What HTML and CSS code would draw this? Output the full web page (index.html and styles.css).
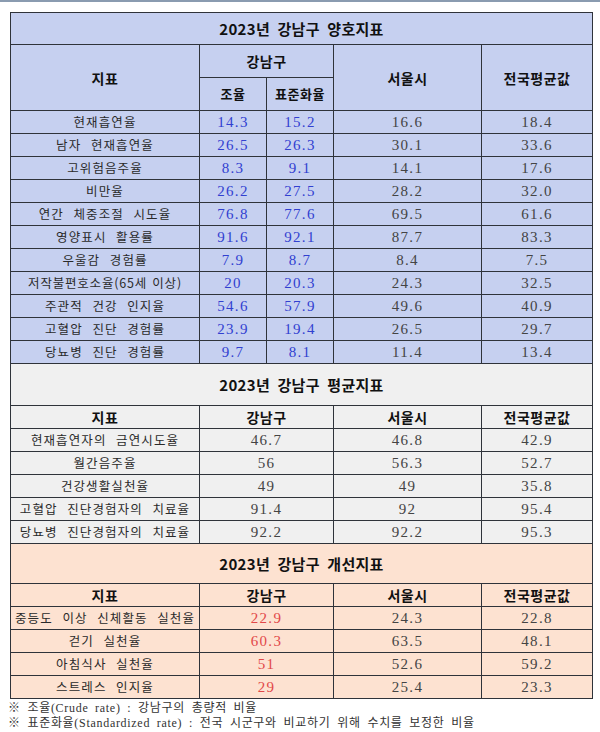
FILE: index.html
```html
<!DOCTYPE html>
<html lang="ko">
<head>
<meta charset="utf-8">
<link rel="stylesheet" href="styles.css">
</head>
<body>
<div class="topline"></div>
<table class="stats">
  <colgroup>
    <col class="c1"><col class="c2"><col class="c3"><col class="c4"><col class="c5">
  </colgroup>
  <tbody class="good">
    <tr class="title"><td colspan="5">2023년 강남구 양호지표</td></tr>
    <tr class="head h2"><td rowspan="2">지표</td><td colspan="2">강남구</td><td rowspan="2">서울시</td><td rowspan="2">전국평균값</td></tr>
    <tr class="head h2 sub"><td>조율</td><td>표준화율</td></tr>
    <tr><td class="name">현재흡연율</td><td class="b">14.3</td><td class="b">15.2</td><td class="n">16.6</td><td class="n">18.4</td></tr>
    <tr><td class="name">남자 현재흡연율</td><td class="b">26.5</td><td class="b">26.3</td><td class="n">30.1</td><td class="n">33.6</td></tr>
    <tr><td class="name">고위험음주율</td><td class="b">8.3</td><td class="b">9.1</td><td class="n">14.1</td><td class="n">17.6</td></tr>
    <tr><td class="name">비만율</td><td class="b">26.2</td><td class="b">27.5</td><td class="n">28.2</td><td class="n">32.0</td></tr>
    <tr><td class="name">연간 체중조절 시도율</td><td class="b">76.8</td><td class="b">77.6</td><td class="n">69.5</td><td class="n">61.6</td></tr>
    <tr><td class="name">영양표시 활용률</td><td class="b">91.6</td><td class="b">92.1</td><td class="n">87.7</td><td class="n">83.3</td></tr>
    <tr><td class="name">우울감 경험률</td><td class="b">7.9</td><td class="b">8.7</td><td class="n">8.4</td><td class="n">7.5</td></tr>
    <tr><td class="name tight">저작불편호소율(65세 이상)</td><td class="b">20</td><td class="b">20.3</td><td class="n">24.3</td><td class="n">32.5</td></tr>
    <tr><td class="name">주관적 건강 인지율</td><td class="b">54.6</td><td class="b">57.9</td><td class="n">49.6</td><td class="n">40.9</td></tr>
    <tr><td class="name">고혈압 진단 경험률</td><td class="b">23.9</td><td class="b">19.4</td><td class="n">26.5</td><td class="n">29.7</td></tr>
    <tr><td class="name">당뇨병 진단 경험률</td><td class="b">9.7</td><td class="b">8.1</td><td class="n">11.4</td><td class="n">13.4</td></tr>
  </tbody>
  <tbody class="avg">
    <tr class="title t2"><td colspan="5">2023년 강남구 평균지표</td></tr>
    <tr class="head"><td>지표</td><td colspan="2">강남구</td><td>서울시</td><td>전국평균값</td></tr>
    <tr><td class="name">현재흡연자의 금연시도율</td><td class="n" colspan="2">46.7</td><td class="n">46.8</td><td class="n">42.9</td></tr>
    <tr><td class="name">월간음주율</td><td class="n" colspan="2">56</td><td class="n">56.3</td><td class="n">52.7</td></tr>
    <tr><td class="name">건강생활실천율</td><td class="n" colspan="2">49</td><td class="n">49</td><td class="n">35.8</td></tr>
    <tr><td class="name">고혈압 진단경험자의 치료율</td><td class="n" colspan="2">91.4</td><td class="n">92</td><td class="n">95.4</td></tr>
    <tr><td class="name">당뇨병 진단경험자의 치료율</td><td class="n" colspan="2">92.2</td><td class="n">92.2</td><td class="n">95.3</td></tr>
  </tbody>
  <tbody class="imp">
    <tr class="title t3"><td colspan="5">2023년 강남구 개선지표</td></tr>
    <tr class="head"><td>지표</td><td colspan="2">강남구</td><td>서울시</td><td>전국평균값</td></tr>
    <tr><td class="name">중등도 이상 신체활동 실천율</td><td class="r" colspan="2">22.9</td><td class="n">24.3</td><td class="n">22.8</td></tr>
    <tr><td class="name">걷기 실천율</td><td class="r" colspan="2">60.3</td><td class="n">63.5</td><td class="n">48.1</td></tr>
    <tr><td class="name">아침식사 실천율</td><td class="r" colspan="2">51</td><td class="n">52.6</td><td class="n">59.2</td></tr>
    <tr><td class="name">스트레스 인지율</td><td class="r" colspan="2">29</td><td class="n">25.4</td><td class="n">23.3</td></tr>
  </tbody>
</table>
<div class="notes">
  <p>※ 조율(Crude rate) : 강남구의 총량적 비율</p>
  <p>※ 표준화율(Standardized rate) : 전국 시군구와 비교하기 위해 수치를 보정한 비율</p>
</div>
</body>
</html>
```
FILE: styles.css
```css
html, body {
  margin: 0;
  padding: 0;
  background: #ffffff;
}
body {
  width: 600px;
  font-family: "Noto Sans CJK KR", "Noto Sans", sans-serif;
  color: #333;
}
.topline {
  height: 2px;
  background: #8a9bb0;
}
.stats {
  margin: 10px 0 0 10px;
  width: 582px;
  border-collapse: collapse;
  table-layout: fixed;
  border: 1.5px solid #3a3f4a;
}
.c1 { width: 189px; }
.c2 { width: 67px; }
.c3 { width: 67px; }
.c4 { width: 148px; }
.c5 { width: 111px; }
.stats td {
  border: 1px solid #2f333a;
  text-align: center;
  padding: 0;
  height: 22px;
  line-height: 20px;
  white-space: nowrap;
  overflow: hidden;
}
.good td { background: #c6d0f0; }
.avg td { background: #f0f0f0; }
.imp td { background: #fde2d1; }
.title td {
  height: 31px;
  font-weight: 700;
  font-size: 15px;
  color: #111;
  letter-spacing: 0.3px;
  word-spacing: 3px;
}
.t2 td { height: 41px; }
.t3 td { height: 39px; }
.head td {
  font-weight: 700;
  font-size: 14px;
  color: #111;
  letter-spacing: 0.5px;
}
.h2 td { height: 32px; }
.sub td { font-size: 13px; }
.name {
  font-size: 12.5px;
  letter-spacing: 1.1px;
  word-spacing: 5px;
  color: #2a2a2a;
}
.name.tight { letter-spacing: 0.8px; word-spacing: 1px; }
.n, .b, .r {
  font-family: "Liberation Serif", "DejaVu Serif", serif;
  font-size: 15px;
  letter-spacing: 1.3px;
}
.n { color: #444; }
.b { color: #3140d0; }
.r { color: #e24848; }
.notes {
  margin: 2px 0 0 8px;
  font-family: "Liberation Serif", "Noto Sans CJK KR", serif;
  font-size: 12px;
  line-height: 15px;
  color: #333;
  letter-spacing: 0.7px;
  word-spacing: 3px;
}
.notes p { margin: 0; white-space: nowrap; }
```
